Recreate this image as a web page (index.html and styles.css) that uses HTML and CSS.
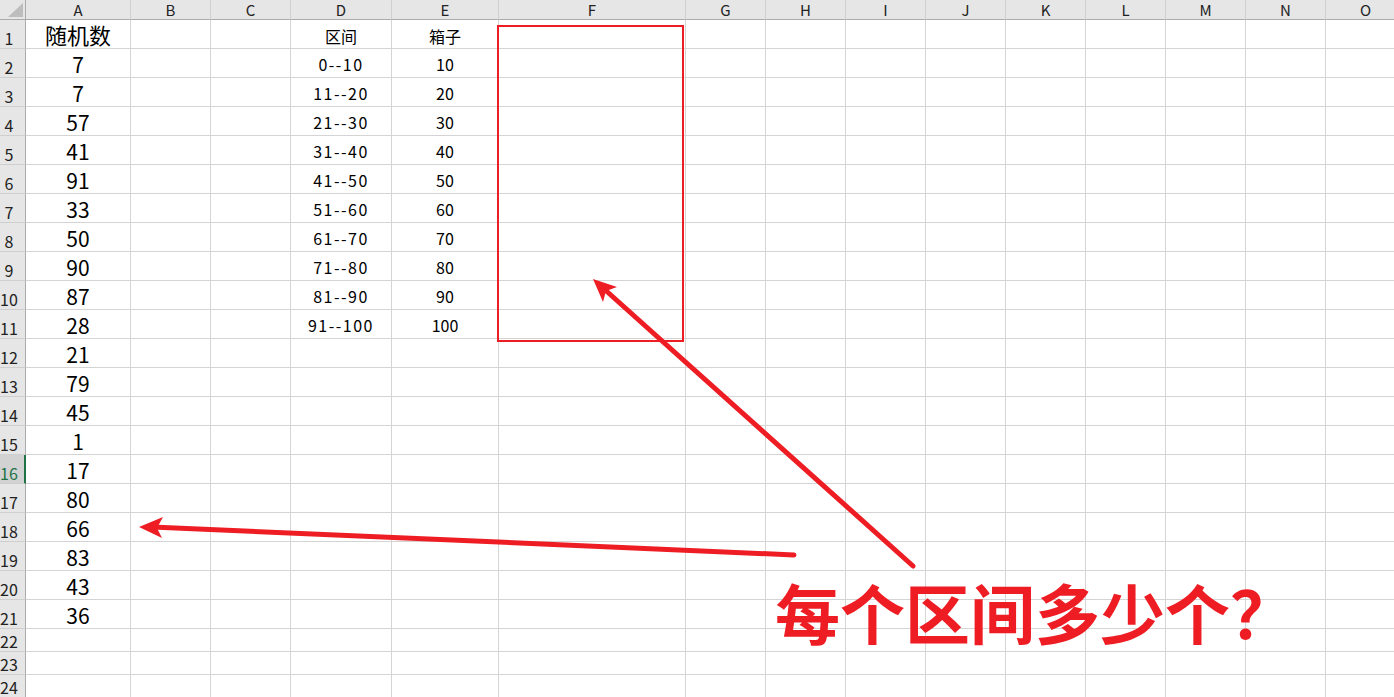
FILE: index.html
```html
<!DOCTYPE html>
<html lang="zh-CN">
<head>
<meta charset="utf-8">
<title>随机数区间统计</title>
<link rel="stylesheet" href="styles.css">
</head>
<body>
<div class="sheet">
  <div class="row head">
    <span class="corner"><span class="tri"></span></span><span>A</span><span>B</span><span>C</span><span>D</span><span>E</span><span>F</span><span>G</span><span>H</span><span>I</span><span>J</span><span>K</span><span>L</span><span>M</span><span>N</span><span>O</span>
  </div>
  <div class="row"><span class="rh">1</span><span class="a zh">随机数</span><span></span><span></span><span class="d zh">区间</span><span class="e zh">箱子</span><span></span><span></span><span></span><span></span><span></span><span></span><span></span><span></span><span></span><span></span></div>
  <div class="row"><span class="rh">2</span><span class="a">7</span><span></span><span></span><span class="d">0--10</span><span class="e">10</span><span></span><span></span><span></span><span></span><span></span><span></span><span></span><span></span><span></span><span></span></div>
  <div class="row"><span class="rh">3</span><span class="a">7</span><span></span><span></span><span class="d">11--20</span><span class="e">20</span><span></span><span></span><span></span><span></span><span></span><span></span><span></span><span></span><span></span><span></span></div>
  <div class="row"><span class="rh">4</span><span class="a">57</span><span></span><span></span><span class="d">21--30</span><span class="e">30</span><span></span><span></span><span></span><span></span><span></span><span></span><span></span><span></span><span></span><span></span></div>
  <div class="row"><span class="rh">5</span><span class="a">41</span><span></span><span></span><span class="d">31--40</span><span class="e">40</span><span></span><span></span><span></span><span></span><span></span><span></span><span></span><span></span><span></span><span></span></div>
  <div class="row"><span class="rh">6</span><span class="a">91</span><span></span><span></span><span class="d">41--50</span><span class="e">50</span><span></span><span></span><span></span><span></span><span></span><span></span><span></span><span></span><span></span><span></span></div>
  <div class="row"><span class="rh">7</span><span class="a">33</span><span></span><span></span><span class="d">51--60</span><span class="e">60</span><span></span><span></span><span></span><span></span><span></span><span></span><span></span><span></span><span></span><span></span></div>
  <div class="row"><span class="rh">8</span><span class="a">50</span><span></span><span></span><span class="d">61--70</span><span class="e">70</span><span></span><span></span><span></span><span></span><span></span><span></span><span></span><span></span><span></span><span></span></div>
  <div class="row"><span class="rh">9</span><span class="a">90</span><span></span><span></span><span class="d">71--80</span><span class="e">80</span><span></span><span></span><span></span><span></span><span></span><span></span><span></span><span></span><span></span><span></span></div>
  <div class="row"><span class="rh">10</span><span class="a">87</span><span></span><span></span><span class="d">81--90</span><span class="e">90</span><span></span><span></span><span></span><span></span><span></span><span></span><span></span><span></span><span></span><span></span></div>
  <div class="row"><span class="rh">11</span><span class="a">28</span><span></span><span></span><span class="d">91--100</span><span class="e">100</span><span></span><span></span><span></span><span></span><span></span><span></span><span></span><span></span><span></span><span></span></div>
  <div class="row"><span class="rh">12</span><span class="a">21</span><span></span><span></span><span></span><span></span><span></span><span></span><span></span><span></span><span></span><span></span><span></span><span></span><span></span><span></span></div>
  <div class="row"><span class="rh">13</span><span class="a">79</span><span></span><span></span><span></span><span></span><span></span><span></span><span></span><span></span><span></span><span></span><span></span><span></span><span></span><span></span></div>
  <div class="row"><span class="rh">14</span><span class="a">45</span><span></span><span></span><span></span><span></span><span></span><span></span><span></span><span></span><span></span><span></span><span></span><span></span><span></span><span></span></div>
  <div class="row"><span class="rh">15</span><span class="a">1</span><span></span><span></span><span></span><span></span><span></span><span></span><span></span><span></span><span></span><span></span><span></span><span></span><span></span><span></span></div>
  <div class="row"><span class="rh sel">16</span><span class="a">17</span><span></span><span></span><span></span><span></span><span></span><span></span><span></span><span></span><span></span><span></span><span></span><span></span><span></span><span></span></div>
  <div class="row"><span class="rh">17</span><span class="a">80</span><span></span><span></span><span></span><span></span><span></span><span></span><span></span><span></span><span></span><span></span><span></span><span></span><span></span><span></span></div>
  <div class="row"><span class="rh">18</span><span class="a">66</span><span></span><span></span><span></span><span></span><span></span><span></span><span></span><span></span><span></span><span></span><span></span><span></span><span></span><span></span></div>
  <div class="row"><span class="rh">19</span><span class="a">83</span><span></span><span></span><span></span><span></span><span></span><span></span><span></span><span></span><span></span><span></span><span></span><span></span><span></span><span></span></div>
  <div class="row"><span class="rh">20</span><span class="a">43</span><span></span><span></span><span></span><span></span><span></span><span></span><span></span><span></span><span></span><span></span><span></span><span></span><span></span><span></span></div>
  <div class="row"><span class="rh">21</span><span class="a">36</span><span></span><span></span><span></span><span></span><span></span><span></span><span></span><span></span><span></span><span></span><span></span><span></span><span></span><span></span></div>
  <div class="row short"><span class="rh">22</span><span></span><span></span><span></span><span></span><span></span><span></span><span></span><span></span><span></span><span></span><span></span><span></span><span></span><span></span><span></span></div>
  <div class="row short"><span class="rh">23</span><span></span><span></span><span></span><span></span><span></span><span></span><span></span><span></span><span></span><span></span><span></span><span></span><span></span><span></span><span></span></div>
  <div class="row short last"><span class="rh">24</span><span></span><span></span><span></span><span></span><span></span><span></span><span></span><span></span><span></span><span></span><span></span><span></span><span></span><span></span><span></span></div>

  <div class="mark-box"></div>
  <svg class="arrows" width="1394" height="697" viewBox="0 0 1394 697" aria-hidden="true">
    <line x1="794" y1="555" x2="152" y2="527" stroke="#ee1d24" stroke-width="5" stroke-linecap="round"/>
    <polygon points="139,527 163,517 157,528 162,538" fill="#ee1d24"/>
    <line x1="913" y1="566" x2="603" y2="288" stroke="#ee1d24" stroke-width="5" stroke-linecap="round"/>
    <polygon points="593,279 617,287 606,291 603,302" fill="#ee1d24"/>
  </svg>
  <div class="callout">每个区间多少个？</div>
</div>
</body>
</html>
```

FILE: styles.css
```css
html, body {
  margin: 0;
  padding: 0;
  background: #ffffff;
  overflow: hidden;
}

body {
  width: 1394px;
  height: 697px;
  font-family: "Noto Sans CJK SC", "Noto Sans", sans-serif;
  color: #000;
}

.sheet {
  position: relative;
  width: 1394px;
  height: 697px;
  overflow: hidden;
}

.row {
  display: grid;
  grid-template-columns: 26px 105px 80px 80px 101px 107px 187px repeat(9, 80px);
  height: 29px;
}

.row.short {
  height: 23px;
}

.row > span {
  box-sizing: border-box;
  border-right: 1px solid #d4d4d4;
  border-bottom: 1px solid #d4d4d4;
  display: flex;
  align-items: flex-end;
  justify-content: center;
  line-height: 1;
  white-space: nowrap;
}

/* column header row */
.row.head {
  height: 20px;
}

.row.head > span {
  background: #e6e6e6;
  border-right: 1px solid #cfcfcf;
  border-bottom: 1px solid #ababab;
  font-size: 15px;
  color: #222;
  padding-bottom: 2px;
}

.row.head > .corner {
  border-right: 1px solid #ababab;
  padding: 0 2px 2px 0;
  justify-content: flex-end;
}

.tri {
  display: block;
  width: 15px;
  height: 14px;
  background: #bdbdbd;
  clip-path: polygon(100% 0, 100% 100%, 0 100%);
}

/* row header */
.row > .rh {
  background: #e6e6e6;
  border-right: 1px solid #ababab;
  border-bottom: 1px solid #cfcfcf;
  font-size: 16px;
  color: #222;
  padding: 0 7px 2px 0;
}

.row.last > .rh {
  align-items: flex-start;
  padding-top: 4px;
  padding-bottom: 0;
}

.row > .rh.sel {
  background: #d2d2d2;
  color: #217346;
  border-right: 2px solid #217346;
  padding-right: 6px;
}

.row > .a {
  font-size: 21px;
  padding-bottom: 2px;
}

.row > .a.zh {
  font-size: 22px;
  padding-bottom: 3px;
}

.row > .d {
  font-size: 16px;
  letter-spacing: 1.5px;
  padding-bottom: 5px;
}

.row > .e {
  font-size: 16px;
  padding-bottom: 5px;
}

.row > .d.zh,
.row > .e.zh {
  letter-spacing: 0;
  font-size: 16px;
  padding-bottom: 4px;
}

/* annotations */
.mark-box {
  position: absolute;
  left: 497px;
  top: 25px;
  width: 187px;
  height: 317px;
  box-sizing: border-box;
  border: 2px solid #ee1d24;
}

.arrows {
  position: absolute;
  left: 0;
  top: 0;
  pointer-events: none;
}

.callout {
  position: absolute;
  left: 775px;
  top: 579px;
  font-size: 65px;
  line-height: 1;
  font-weight: 700;
  color: #ee1d24;
  white-space: nowrap;
}
```
